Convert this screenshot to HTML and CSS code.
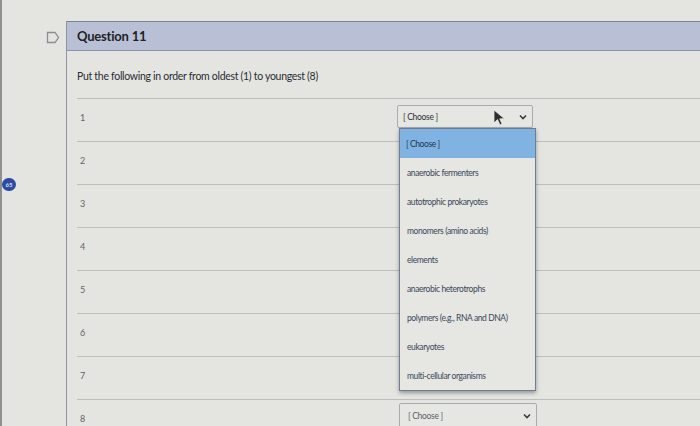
FILE: index.html
```html
<!DOCTYPE html>
<html>
<head>
<meta charset="utf-8">
<link rel="stylesheet" href="styles.css">
</head>
<body>
<div class="page">
  <div class="gutter">
    <svg class="flag" width="14" height="13" viewBox="0 0 14 13"><path d="M1.5 1.5 H9 L12.5 6.5 L9 11.5 H1.5 Z" fill="none" stroke="#8a8d92" stroke-width="1.3"/></svg>
  </div>
  <div class="card">
    <div class="header">Question 11</div>
    <div class="body">
      <div class="prompt">Put the following in order from oldest (1) to youngest (8)</div>
      <div class="rows">
        <div class="row"><span class="num">1</span><div class="select open"><span>[ Choose ]</span><svg class="chev" width="10" height="8" viewBox="0 0 10 8"><path d="M2 2.5 L5 5.5 L8 2.5" fill="none" stroke="#3a3c40" stroke-width="1.6"/></svg></div></div>
        <div class="row"><span class="num">2</span></div>
        <div class="row"><span class="num">3</span></div>
        <div class="row"><span class="num">4</span></div>
        <div class="row"><span class="num">5</span></div>
        <div class="row"><span class="num">6</span></div>
        <div class="row"><span class="num">7</span></div>
        <div class="row last"><span class="num">8</span><div class="select low"><span>[ Choose ]</span><svg class="chev" width="10" height="8" viewBox="0 0 10 8"><path d="M2 2.5 L5 5.5 L8 2.5" fill="none" stroke="#3a3c40" stroke-width="1.6"/></svg></div></div>
      </div>
    </div>
  </div>
</div>
<div class="badge">65</div>
<svg class="cursor" width="14" height="18" viewBox="0 0 14 18"><path d="M1 1 L1 14 L4.5 10.5 L7 16 L9 15 L6.8 9.8 L11.5 9.8 Z" fill="#2b2d30" stroke="#e8e8e8" stroke-width="0.8"/></svg>
<ul class="menu">
  <li class="sel">[ Choose ]</li>
  <li>anaerobic fermenters</li>
  <li>autotrophic prokaryotes</li>
  <li>monomers (amino acids)</li>
  <li>elements</li>
  <li>anaerobic heterotrophs</li>
  <li>polymers (e.g., RNA and DNA)</li>
  <li>eukaryotes</li>
  <li>multi-cellular organisms</li>
</ul>
</body>
</html>
```

FILE: styles.css
```css
html, body {
  margin: 0;
  padding: 0;
  background: #e4e5e1;
  font-family: Lato, "Open Sans", sans-serif;
  color: #2d2f33;
  overflow: hidden;
}
body {
  width: 700px;
  height: 426px;
  position: relative;
  border-left: 2px solid #8e9090;
  box-sizing: border-box;
}
.page {
  display: flex;
  padding-top: 21px;
}
.gutter {
  width: 64px;
  flex: none;
  display: flex;
  justify-content: flex-end;
  padding-right: 6px;
  box-sizing: border-box;
}
.flag {
  margin-top: 10px;
}
.card {
  flex: 1;
  border-left: 1px solid #8f9296;
  height: 405px;
}
.header {
  height: 30px;
  background: #b9c0d5;
  border-top: 1px solid #7c8293;
  border-bottom: 1px solid #8b92a6;
  box-sizing: border-box;
  padding-left: 10px;
  display: flex;
  align-items: center;
  font-weight: bold;
  font-size: 13px;
  letter-spacing: -0.2px;
  color: #1f2226;
}
.body {
  padding-left: 10px;
}
.prompt {
  height: 47px;
  display: flex;
  align-items: center;
  font-size: 10.5px;
  letter-spacing: -0.3px;
  padding-top: 2px;
  box-sizing: border-box;
  color: #2a2c30;
}
.row {
  height: 42px;
  border-top: 1px solid #bcbebd;
  display: grid;
  grid-template-columns: 320px 136px;
  align-items: start;
  position: relative;
}
.num {
  font-size: 9px;
  color: #606468;
  padding-top: 13px;
  padding-left: 3px;
}
.select {
  margin-top: 6px;
  height: 23px;
  border: 1px solid #a9acae;
  border-radius: 2px;
  background: #e6e7e3;
  box-sizing: border-box;
  display: flex;
  align-items: center;
  justify-content: space-between;
  padding: 0 4px 0 5px;
  font-size: 8.5px;
  letter-spacing: -0.3px;
  color: #2a2e34;
}
.select.low {
  margin-top: 3px;
  height: 26px;
  margin-left: 2px;
  width: 138px;
  color: #5a6068;
  padding-left: 8px;
}
.badge {
  position: absolute;
  left: 0;
  top: 178px;
  width: 14px;
  height: 13px;
  border-radius: 7px;
  background: #2c4aa2;
  color: #d8e0ff;
  font-size: 6px;
  display: flex;
  align-items: center;
  justify-content: center;
  font-weight: bold;
}
.cursor {
  position: absolute;
  left: 491px;
  top: 109px;
}
.menu {
  position: absolute;
  left: 397px;
  top: 128px;
  width: 137px;
  margin: 0;
  padding: 0;
  list-style: none;
  background: #e6e7e3;
  border: 1px solid #6d7d94;
  box-shadow: 0 2px 4px rgba(0,0,0,0.35);
  box-sizing: border-box;
}
.menu li {
  height: 29px;
  display: flex;
  align-items: center;
  padding-left: 7px;
  font-size: 8.5px;
  letter-spacing: -0.4px;
  color: #3a4659;
}
.menu li.sel {
  background: #80b2e2;
  color: #1f3550;
  padding-left: 6px;
}
```
